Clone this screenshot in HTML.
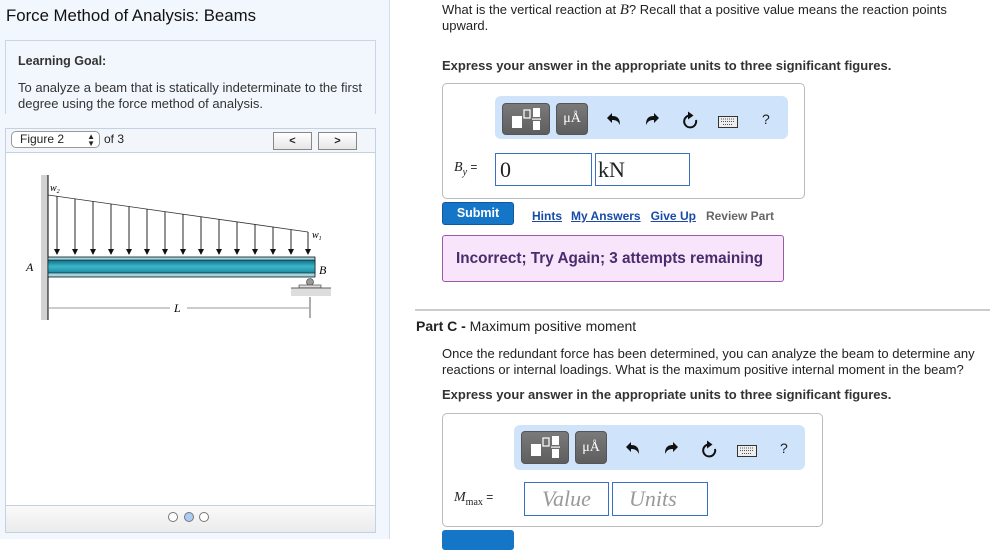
<!DOCTYPE html>
<html><head><meta charset="utf-8"><style>
*{margin:0;padding:0;box-sizing:border-box}
body{width:1002px;height:539px;overflow:hidden;background:#fff;font-family:"Liberation Sans",Arial,sans-serif;color:#222;position:relative}
.a{position:absolute}
.left{left:0;top:0;width:390px;height:539px;background:#f2f7fe;border-right:1px solid #d4deea}
.tb{position:absolute;background:#cfe4fb;border-radius:6px}
.db{position:absolute;background:linear-gradient(#7a7a7a,#5e5e5e);border-radius:4px;border:1px solid #555}
.inp{position:absolute;border:1px solid #3a6fc6;background:#fff}
.lnk{color:#1a4aa8;text-decoration:underline;font-weight:bold;font-size:12px}
</style></head><body>
<div class="a left"></div>
<div class="a" style="left:6px;top:6px;font-size:16.8px;color:#111">Force Method of Analysis: Beams</div>
<div class="a" style="left:5px;top:40px;width:371px;height:74px;border:1px solid #c9d6e5;border-bottom:none;background:#f2f7fe"></div>
<div class="a" style="left:18px;top:54px;font-size:12.5px;font-weight:bold;color:#333">Learning Goal:</div>
<div class="a" style="left:18px;top:80px;font-size:13px;line-height:16px;color:#333;width:365px">To analyze a beam that is statically indeterminate to the first degree using the force method of analysis.</div>
<!-- figure panel -->
<div class="a" style="left:5px;top:128px;width:371px;height:405px;border:1px solid #c3d1e2;background:#fff"></div>
<div class="a" style="left:5px;top:128px;width:371px;height:25px;background:#f2f5f9;border:1px solid #c3d1e2"></div>
<div class="a" style="left:11px;top:131px;width:89px;height:17px;border:1px solid #999;border-radius:5px;background:#fff;font-size:12px;padding-left:8px;line-height:15px">Figure 2<span style="position:absolute;right:4px;top:0;font-size:8px;line-height:7px;top:1px">▲<br>▼</span></div>
<div class="a" style="left:104px;top:132px;font-size:12px">of 3</div>
<div class="a" style="left:273px;top:132px;width:39px;height:18px;border:1px solid #888;background:linear-gradient(#fff,#e6e6e6);text-align:center;font-size:11px;font-weight:bold;line-height:16px">&lt;</div>
<div class="a" style="left:318px;top:132px;width:39px;height:18px;border:1px solid #888;background:linear-gradient(#fff,#e6e6e6);text-align:center;font-size:11px;font-weight:bold;line-height:16px">&gt;</div>
<svg class="a" style="left:0;top:160px" width="390" height="170" viewBox="0 160 390 170">
<rect x="41" y="175" width="7" height="145" fill="#d2d2d2"/>
<line x1="48" y1="175" x2="48" y2="320" stroke="#000" stroke-width="1"/>
<text x="50" y="191" font-family="Liberation Serif" font-style="italic" font-size="10">w<tspan font-size="6" dy="2">2</tspan></text>
<text x="312" y="238" font-family="Liberation Serif" font-style="italic" font-size="10">w<tspan font-size="6" dy="2">1</tspan></text>
<line x1="48" y1="195" x2="308" y2="232" stroke="#333" stroke-width="0.8"/>
<g stroke="#111" stroke-width="0.9" fill="#111">
<path d="M57 196.3V254M75 198.9V254M93 201.4V254M111 204V254M129 206.5V254M147 209.1V254M165 211.7V254M183 214.2V254M201 216.8V254M219 219.4V254M237 221.9V254M255 224.5V254M273 227V254M291 229.6V254M308 232V254"/>
</g>
<g fill="#111"><path d="M54 249h6l-3 6zM72 249h6l-3 6zM90 249h6l-3 6zM108 249h6l-3 6zM126 249h6l-3 6zM144 249h6l-3 6zM162 249h6l-3 6zM180 249h6l-3 6zM198 249h6l-3 6zM216 249h6l-3 6zM234 249h6l-3 6zM252 249h6l-3 6zM270 249h6l-3 6zM288 249h6l-3 6zM305 249h6l-3 6z"/></g>
<defs><linearGradient id="bg" x1="0" y1="0" x2="0" y2="1"><stop offset="0" stop-color="#0e6f86"/><stop offset=".5" stop-color="#3fb6c9"/><stop offset="1" stop-color="#1a8aa0"/></linearGradient></defs>
<rect x="48" y="257" width="267" height="20" fill="#9fd6e2" stroke="#111" stroke-width="0.8"/>
<rect x="48" y="260" width="267" height="13" fill="url(#bg)" stroke="#111" stroke-width="0.6"/>
<text x="26" y="271" font-family="Liberation Serif" font-style="italic" font-size="12">A</text>
<text x="319" y="274" font-family="Liberation Serif" font-style="italic" font-size="12">B</text>
<circle cx="310" cy="282" r="3.5" fill="#999" stroke="#333" stroke-width="0.6"/>
<rect x="299" y="285" width="22" height="3" fill="#ddd" stroke="#333" stroke-width="0.6"/>
<rect x="291" y="288" width="40" height="8" fill="#ddd"/>
<line x1="291" y1="288" x2="331" y2="288" stroke="#333" stroke-width="0.8"/>
<line x1="310" y1="297" x2="310" y2="318" stroke="#333" stroke-width="0.8"/>
<line x1="49" y1="308" x2="170" y2="308" stroke="#333" stroke-width="0.6"/>
<line x1="187" y1="308" x2="309" y2="308" stroke="#333" stroke-width="0.6"/>
<text x="174" y="312" font-family="Liberation Serif" font-style="italic" font-size="12">L</text>
</svg>
<div class="a" style="left:5px;top:505px;width:371px;height:28px;border:1px solid #c3d1e2;background:linear-gradient(#fafafa,#ebebeb)"></div>
<div class="a" style="left:168px;top:512px;width:10px;height:10px;border:1px solid #777;border-radius:50%;background:#fff"></div>
<div class="a" style="left:184px;top:512px;width:10px;height:10px;border:1px solid #777;border-radius:50%;background:#a9cdf5"></div>
<div class="a" style="left:199px;top:512px;width:10px;height:10px;border:1px solid #777;border-radius:50%;background:#fff"></div>

<!-- right -->
<div class="a" style="left:442px;top:2px;font-size:13px;line-height:15px;width:540px;color:#222">What is the vertical reaction at <i style="font-family:'Liberation Serif';font-size:15px">B</i>? Recall that a positive value means the reaction points upward.</div>
<div class="a" style="left:442px;top:58px;font-size:13px;font-weight:bold;color:#333">Express your answer in the appropriate units to three significant figures.</div>
<div class="a" style="left:442px;top:83px;width:363px;height:116px;border:1px solid #bbb;border-radius:5px"></div>
<div class="tb" style="left:495px;top:96px;width:293px;height:43px"></div>
<div class="db" style="left:502px;top:103px;width:48px;height:32px"></div>
<svg class="a" style="left:502px;top:103px" width="48" height="32"><rect x="10" y="13" width="10" height="12" fill="#fff"/><rect x="22" y="7" width="6" height="8" fill="none" stroke="#fff" stroke-width="1.2"/><rect x="31" y="5" width="7" height="9" fill="#fff"/><rect x="30" y="15.5" width="9" height="1.2" fill="#fff"/><rect x="31" y="18" width="7" height="9" fill="#fff"/></svg>
<div class="db" style="left:556px;top:103px;width:32px;height:32px;color:#fff;font-family:'Liberation Serif';font-size:14px;text-align:center;line-height:30px">μÅ</div>
<svg class="a" style="left:604px;top:110px" width="140" height="22"><path d="M3 8l5-5v3c5 0 8 2 8 9-2-4-4-5-8-5v3z" fill="#111"/><path d="M55 8l-5-5v3c-5 0-8 2-8 9 2-4 4-5 8-5v3z" fill="#111"/><path d="M88 5.7A6 6 0 1 0 92 10" fill="none" stroke="#111" stroke-width="2"/><path d="M84 1.5l5.5 4-5.5 4z" fill="#111"/><rect x="114.5" y="6.5" width="19" height="11" fill="#eee" stroke="#333"/><path d="M117 9h14M117 11.5h14M119 14.5h10" stroke="#555" stroke-width="1" stroke-dasharray="1 1"/></svg>
<div class="a" style="left:762px;top:111px;font-size:14px">?</div>
<div class="a" style="left:454px;top:160px;font-family:'Liberation Serif';font-style:italic;font-size:14px">B<sub style="font-size:10px">y</sub><span style="font-style:normal;font-family:'Liberation Sans';font-size:12px"> =</span></div>
<div class="inp" style="left:495px;top:153px;width:97px;height:33px;font-family:'Liberation Serif';font-size:22px;padding-left:4px;line-height:31px">0</div>
<div class="inp" style="left:595px;top:153px;width:95px;height:33px;font-family:'Liberation Serif';font-size:22px;padding-left:2px;line-height:31px">kN</div>
<div class="a" style="left:442px;top:202px;width:72px;height:23px;background:#1576c8;border:1px solid #0e5a9e;border-radius:3px;color:#fff;font-weight:bold;font-size:12.5px;text-align:center;line-height:21px">Submit</div>
<div class="a" style="left:532px;top:207px;white-space:nowrap"><span class="lnk">Hints</span><span class="lnk" style="margin-left:9px">My Answers</span><span class="lnk" style="margin-left:10px">Give Up</span><span style="font-weight:bold;color:#666;font-size:12px;margin-left:10px">Review Part</span></div>
<div class="a" style="left:442px;top:235px;width:342px;height:47px;background:#f8e4fb;border:1px solid #9a5aa8;border-radius:3px;color:#4a2c6c;font-weight:bold;font-size:15.3px;padding-left:13px;line-height:45px;white-space:nowrap">Incorrect; Try Again; 3 attempts remaining</div>
<div class="a" style="left:415px;top:309px;width:575px;height:2px;background:#ccc"></div>
<div class="a" style="left:416px;top:318px;font-size:14px"><b>Part C -</b> Maximum positive moment</div>
<div class="a" style="left:442px;top:346px;font-size:13px;line-height:15.5px;width:550px">Once the redundant force has been determined, you can analyze the beam to determine any reactions or internal loadings. What is the maximum positive internal moment in the beam?</div>
<div class="a" style="left:442px;top:387px;font-size:13px;font-weight:bold;color:#333">Express your answer in the appropriate units to three significant figures.</div>
<div class="a" style="left:442px;top:413px;width:381px;height:114px;border:1px solid #bbb;border-radius:5px"></div>
<div class="tb" style="left:514px;top:425px;width:291px;height:45px"></div>
<div class="db" style="left:521px;top:431px;width:48px;height:33px"></div>
<svg class="a" style="left:521px;top:431px" width="48" height="33"><rect x="10" y="13" width="10" height="12" fill="#fff"/><rect x="22" y="7" width="6" height="8" fill="none" stroke="#fff" stroke-width="1.2"/><rect x="31" y="5" width="7" height="9" fill="#fff"/><rect x="30" y="15.5" width="9" height="1.2" fill="#fff"/><rect x="31" y="18" width="7" height="9" fill="#fff"/></svg>
<div class="db" style="left:575px;top:431px;width:32px;height:33px;color:#fff;font-family:'Liberation Serif';font-size:14px;text-align:center;line-height:31px">μÅ</div>
<svg class="a" style="left:623px;top:439px" width="140" height="22"><path d="M3 8l5-5v3c5 0 8 2 8 9-2-4-4-5-8-5v3z" fill="#111"/><path d="M55 8l-5-5v3c-5 0-8 2-8 9 2-4 4-5 8-5v3z" fill="#111"/><path d="M88 5.7A6 6 0 1 0 92 10" fill="none" stroke="#111" stroke-width="2"/><path d="M84 1.5l5.5 4-5.5 4z" fill="#111"/><rect x="114.5" y="6.5" width="19" height="11" fill="#eee" stroke="#333"/><path d="M117 9h14M117 11.5h14M119 14.5h10" stroke="#555" stroke-width="1" stroke-dasharray="1 1"/></svg>
<div class="a" style="left:780px;top:440px;font-size:14px">?</div>
<div class="a" style="left:454px;top:490px;font-family:'Liberation Serif';font-style:italic;font-size:14px">M<sub style="font-size:10px;font-style:normal">max</sub><span style="font-style:normal;font-family:'Liberation Sans';font-size:12px"> =</span></div>
<div class="inp" style="left:524px;top:482px;width:85px;height:34px;font-family:'Liberation Serif';font-style:italic;color:#999;font-size:22px;text-align:center;line-height:32px">Value</div>
<div class="inp" style="left:612px;top:482px;width:96px;height:34px;font-family:'Liberation Serif';font-style:italic;color:#999;font-size:22px;padding-left:16px;line-height:32px">Units</div>
<div class="a" style="left:442px;top:530px;width:72px;height:20px;background:#1576c8;border-radius:3px"></div>
</body></html>
